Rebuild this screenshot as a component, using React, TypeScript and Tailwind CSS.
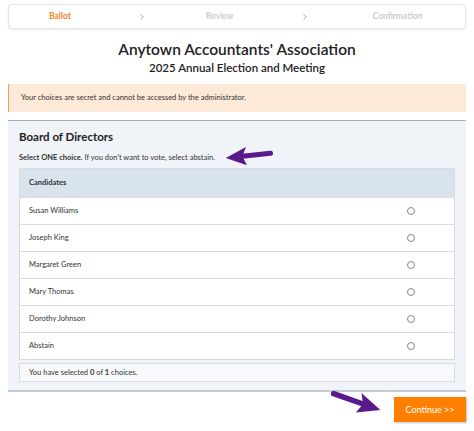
import { ChevronRight } from 'lucide-react';

const candidates = [
    'Susan Williams',
    'Joseph King',
    'Margaret Green',
    'Mary Thomas',
    'Dorothy Johnson',
    'Abstain',
];

function Arrow({ className, flip }: { className: string; flip?: boolean }) {
    return (
        <svg
            viewBox="0 0 60 24"
            className={className}
            style={flip ? { transform: 'scaleX(-1)' } : undefined}
        >
            <path
                d="M22 12 L56 10"
                stroke="#5b1a8c"
                strokeWidth="6"
                strokeLinecap="round"
                fill="none"
            />
            <path d="M2 13 L27 1 L22 12 L27 23 Z" fill="#5b1a8c" />
        </svg>
    );
}

export default function App() {
    return (
        <div className="min-h-[431px] bg-white px-2 pt-1 font-['Lato',sans-serif] text-[#333]">
            {/* Stepper */}
            <div className="flex h-[25px] items-center rounded-sm border border-[#e4e6ea] bg-white text-[8.5px] font-bold shadow-[0_1px_2px_rgba(0,0,0,0.08)]">
                <div className="ml-[40px] text-[#f0862a]">Ballot</div>
                <ChevronRight className="ml-[66px] h-[10px] w-[10px] text-[#999]" />
                <div className="ml-[59px] text-[#ccc]">Review</div>
                <ChevronRight className="ml-[66px] h-[10px] w-[10px] text-[#999]" />
                <div className="ml-[63px] text-[#ccc]">Confirmation</div>
            </div>

            {/* Title */}
            <div className="mt-[13px] text-center leading-none">
                <h1 className="text-[15.5px] font-semibold text-[#222]">
                    Anytown Accountants' Association
                </h1>
                <h2 className="mt-[4px] text-[11.5px] font-semibold text-[#222]">
                    2025 Annual Election and Meeting
                </h2>
            </div>

            {/* Notice */}
            <div className="mt-[11px] flex h-[28px] items-center border-l border-[#f0a060] bg-[#fde9d7] pl-[12px] text-[7.5px] text-[#333]">
                Your choices are secret and cannot be accessed by the administrator.
            </div>

            {/* Card */}
            <div className="mt-[8px] border-t border-b-2 border-t-[#a3abbb] border-b-[#c6ccd6] bg-[#f0f3f8] px-[11px] pt-[10px] pb-[8px]">
                <h3 className="text-[11.5px] font-bold leading-none text-[#222]">
                    Board of Directors
                </h3>
                <div className="relative mt-[11px] text-[7.5px] leading-none">
                    <span className="font-bold">Select ONE choice.</span> If you don't
                    want to vote, select abstain.
                    <Arrow className="absolute top-[-8px] left-[203px] h-[20px] w-[54px] -rotate-[3deg]" />
                </div>
                <div className="mt-[7px] border border-[#d6dbe2]">
                    <div className="flex h-[28px] items-center bg-[#d9e3ed] pl-[9px] text-[7.5px] font-bold">
                        Candidates
                    </div>
                    {candidates.map((c) => (
                        <div
                            key={c}
                            className="flex h-[27px] items-center justify-between border-t border-[#d9dde3] bg-white pl-[9px] pr-[39px] text-[7.5px]"
                        >
                            <span>{c}</span>
                            <span className="h-[8px] w-[8px] rounded-full border border-[#888]" />
                        </div>
                    ))}
                </div>
                <div className="mt-[3px] flex h-[19px] items-center border border-[#d9dde3] bg-[#f8f9fb] pl-[9px] text-[7.5px]">
                    You have selected&nbsp;<b>0</b>&nbsp;of&nbsp;<b>1</b>&nbsp;choices.
                </div>
            </div>

            {/* Continue */}
            <div className="relative mt-[5px] flex justify-end">
                <Arrow
                    flip
                    className="absolute top-[-6px] right-[82px] h-[22px] w-[56px] rotate-[16deg]"
                />
                <button className="h-[25px] w-[72px] bg-[#ff7f00] text-[9px] text-white shadow-[1px_1px_2px_rgba(0,0,0,0.25)]">
                    Continue &gt;&gt;
                </button>
            </div>
        </div>
    );
}
